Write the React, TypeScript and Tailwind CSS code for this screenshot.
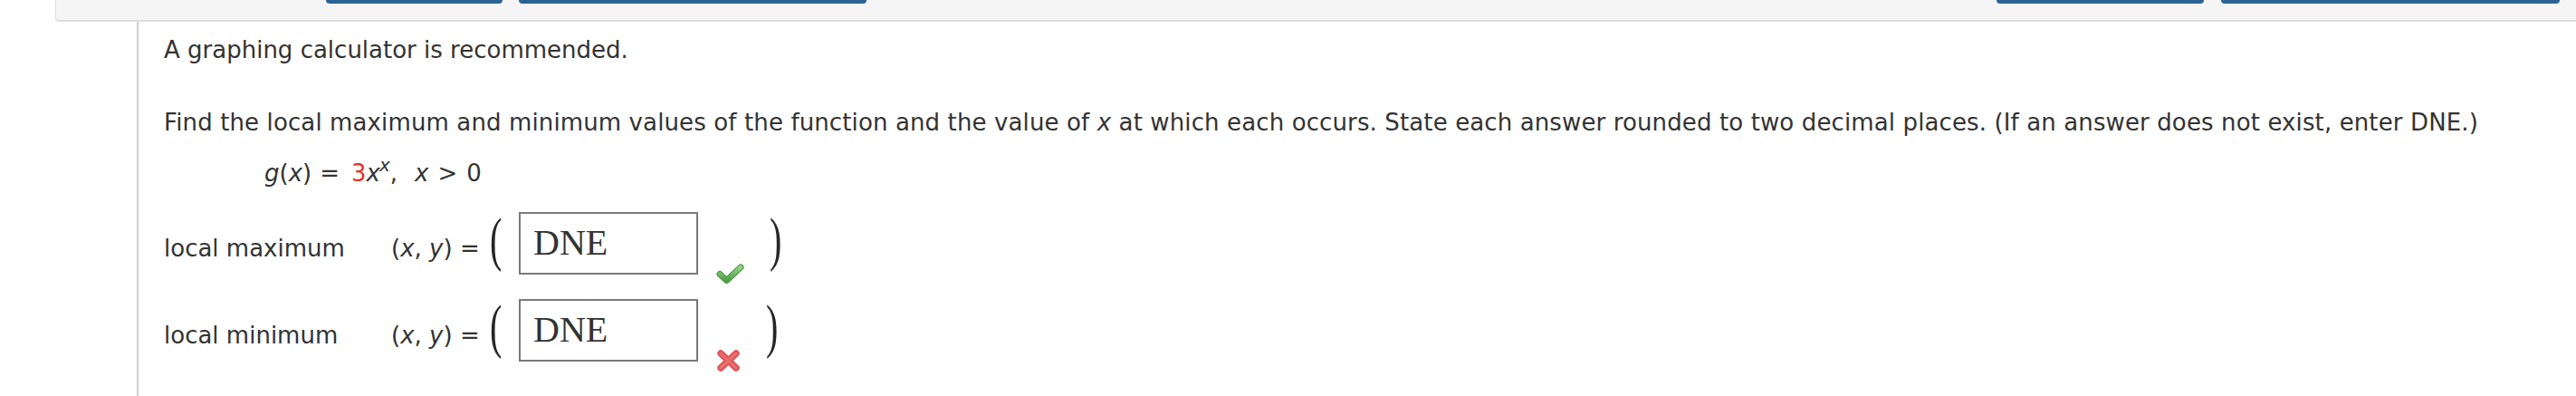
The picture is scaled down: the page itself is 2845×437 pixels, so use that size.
import React from "react";

const sans = "font-['DejaVu_Sans','Verdana',sans-serif]";

function Paren({ ch, shift }: { ch: string; shift: string }) {
  return (
    <span
      className={
        "inline-block font-['Liberation_Serif',serif] text-[40px] leading-[40px] text-[#262626] scale-y-[1.65] " +
        shift
      }
    >
      {ch}
    </span>
  );
}

function CheckIcon() {
  return (
    <svg width="31" height="24" viewBox="0 0 31 24" aria-hidden>
      <defs>
        <linearGradient id="ck" x1="0" y1="0" x2="0" y2="1">
          <stop offset="0" stopColor="#93d585" />
          <stop offset="1" stopColor="#4f9f47" />
        </linearGradient>
      </defs>
      <polyline
        points="4,12.5 11.5,19.5 27,5"
        fill="none"
        stroke="#4e9847"
        strokeWidth="7"
        strokeLinecap="round"
        strokeLinejoin="round"
      />
      <polyline
        points="4,12.5 11.5,19.5 27,5"
        fill="none"
        stroke="url(#ck)"
        strokeWidth="4.5"
        strokeLinecap="round"
        strokeLinejoin="round"
      />
    </svg>
  );
}

function CrossIcon() {
  return (
    <svg width="27" height="26" viewBox="0 0 27 26" aria-hidden>
      <g fill="none" strokeLinecap="round">
        <path d="M5 5 L22 21 M22 5 L5 21" stroke="#de5656" strokeWidth="7.5" />
        <path d="M5 5 L22 21 M22 5 L5 21" stroke="#ec7c7c" strokeWidth="3" opacity="0.7" />
      </g>
    </svg>
  );
}

function AnswerRow({
  label,
  correct,
  rightGap,
}: {
  label: string;
  correct: boolean;
  rightGap: string;
}) {
  return (
    <div className="flex items-start h-[69px]">
      <div className="w-[251px] mt-[22px] leading-[36px]">{label}</div>
      <div className="w-[108px] mt-[22px] leading-[36px] whitespace-pre">
        (<span className="italic">x</span>, <span className="italic">y</span>) =
      </div>
      <div className="w-[33px] h-[69px] flex items-center pl-[1px]">
        <Paren ch="(" shift="-translate-y-[4px]" />
      </div>
      <div className="w-[198px] h-[69px] border-2 border-[#7a7a7a] bg-white pl-[14px] pt-[10px]">
        <span className="font-['Liberation_Serif',serif] text-[40px] leading-[44px] text-[#333]">
          DNE
        </span>
      </div>
      <div className={"ml-[20px] w-[31px] " + (correct ? "mt-[56px]" : "mt-[55px]")}>
        {correct ? <CheckIcon /> : <CrossIcon />}
      </div>
      <div className={"h-[69px] flex items-center " + rightGap}>
        <Paren ch=")" shift="-translate-y-[4px]" />
      </div>
    </div>
  );
}

export default function App() {
  return (
    <div className={"w-[2845px] h-[437px] bg-white overflow-hidden text-[26px] text-[#333] " + sans}>
      {/* toolbar strip, cut off at the top */}
      <div className="ml-[61px] h-[24px] bg-[#f5f5f5] border-l border-b-2 border-[#dddddd] rounded-bl-[4px] flex items-start">
        <div className="ml-[298px] w-[195px] h-[4px] rounded-b-[4px] bg-[#2b6395]" />
        <div className="ml-[18px] w-[384px] h-[4px] rounded-b-[4px] bg-[#2b6395]" />
        <div className="flex-1" />
        <div className="w-[229px] h-[4px] rounded-b-[4px] bg-[#2b6395]" />
        <div className="ml-[19px] w-[374px] h-[4px] rounded-b-[4px] bg-[#2b6395]" />
        <div className="w-[18px]" />
      </div>

      <div className="ml-[151px] h-[413px] border-l-2 border-[#d2d2d2] pl-[28px] pt-[13px]">
        <p className="leading-[36px]">A graphing calculator is recommended.</p>

        <p className="mt-[44px] leading-[36px] whitespace-nowrap tracking-[0.12px]">
          Find the local maximum and minimum values of the function and the value of{" "}
          <span className="italic">x</span> at which each occurs. State each answer rounded to
          two decimal places. (If an answer does not exist, enter DNE.)
        </p>

        <div className="mt-[20px] pl-[111px] leading-[36px] h-[36px] whitespace-pre flex items-baseline">
          <span className="italic">g</span>
          <span>(</span>
          <span className="italic">x</span>
          <span>)</span>
          <span className="ml-[9px]">=</span>
          <span className="ml-[13px] text-[#e8332a]">3</span>
          <span className="italic">x</span>
          <span className="italic text-[20px] leading-none relative -top-[11px] -ml-[1px]">x</span>
          <span>,</span>
          <span className="ml-[19px] italic">x</span>
          <span className="ml-[10px]">&gt;</span>
          <span className="ml-[10px]">0</span>
        </div>

        <div className="mt-[25px] flex flex-col gap-[27px]">
          <AnswerRow label="local maximum" correct={true} rightGap="ml-[28px]" />
          <AnswerRow label="local minimum" correct={false} rightGap="ml-[24px]" />
        </div>
      </div>
    </div>
  );
}
